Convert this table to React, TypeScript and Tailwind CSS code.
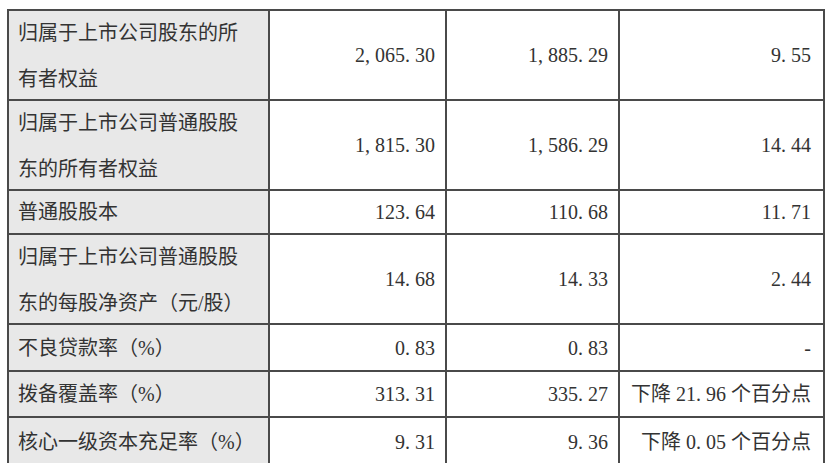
import React from 'react';

interface Row {
    label: string[];
    values: string[];
    h: string;
}

const rows: Row[] = [
    { label: ['归属于上市公司股东的所', '有者权益'], values: ['2,065.30', '1,885.29', '9.55'], h: 'h-[89px]' },
    { label: ['归属于上市公司普通股股', '东的所有者权益'], values: ['1,815.30', '1,586.29', '14.44'], h: 'h-[90px]' },
    { label: ['普通股股本'], values: ['123.64', '110.68', '11.71'], h: 'h-[44px]' },
    { label: ['归属于上市公司普通股股', '东的每股净资产（元/股）'], values: ['14.68', '14.33', '2.44'], h: 'h-[89px]' },
    { label: ['不良贷款率（%）'], values: ['0.83', '0.83', '-'], h: 'h-[47px]' },
    { label: ['拨备覆盖率（%）'], values: ['313.31', '335.27', '下降 21.96 个百分点'], h: 'h-[46px]' },
    { label: ['核心一级资本充足率（%）'], values: ['9.31', '9.36', '下降 0.05 个百分点'], h: 'h-[50px]' },
];

// digits are set like the old report font: comma and point take a full digit width
const Num: React.FC<{ text: string }> = ({ text }) => (
    <>
        {text.split('').map((c, i) =>
            c === ',' || c === '.' ? (
                <span key={i} className="inline-block w-[10px] text-left">{c}</span>
            ) : (
                <span key={i}>{c}</span>
            )
        )}
    </>
);

const App: React.FC = () => {
    return (
        <div className="w-[830px] h-[463px] overflow-hidden bg-white pt-[9px] pl-[7px] text-[#333] font-['Liberation_Serif','Noto_Sans_CJK_SC',serif] text-[20px]">
            <table className="border-collapse table-fixed w-[816px]">
                <colgroup>
                    <col className="w-[261px]" />
                    <col className="w-[177px]" />
                    <col className="w-[173px]" />
                    <col className="w-[205px]" />
                </colgroup>
                <tbody>
                    {rows.map((r, idx) => (
                        <tr key={idx} className={r.h}>
                            <td className="border-2 border-[#4a4a4a] bg-[#e8e8e8] pl-[9px] pr-1 p-0 align-middle whitespace-nowrap">
                                <div className={r.label.length > 1 ? 'leading-[46px] -my-[3px] pt-[2px]' : 'leading-[28px]'}>
                                    {r.label.map((l, j) => (
                                        <div key={j}>{l}</div>
                                    ))}
                                </div>
                            </td>
                            {r.values.map((v, j) => (
                                <td key={j} className={`border-2 border-[#4a4a4a] p-0 align-middle text-right whitespace-nowrap leading-[28px] ${j === 2 ? 'pr-[12px]' : 'pr-[10px]'}`}>
                                    <Num text={v} />
                                </td>
                            ))}
                        </tr>
                    ))}
                </tbody>
            </table>
        </div>
    );
};

export default App;
